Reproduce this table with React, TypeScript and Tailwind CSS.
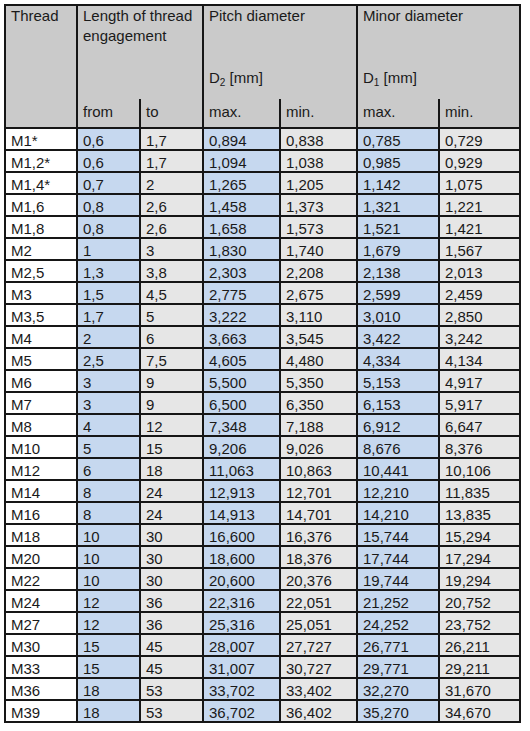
import React from 'react';
import clsx from 'clsx';

const rows: string[][] = [
    ['M1*', '0,6', '1,7', '0,894', '0,838', '0,785', '0,729'],
    ['M1,2*', '0,6', '1,7', '1,094', '1,038', '0,985', '0,929'],
    ['M1,4*', '0,7', '2', '1,265', '1,205', '1,142', '1,075'],
    ['M1,6', '0,8', '2,6', '1,458', '1,373', '1,321', '1,221'],
    ['M1,8', '0,8', '2,6', '1,658', '1,573', '1,521', '1,421'],
    ['M2', '1', '3', '1,830', '1,740', '1,679', '1,567'],
    ['M2,5', '1,3', '3,8', '2,303', '2,208', '2,138', '2,013'],
    ['M3', '1,5', '4,5', '2,775', '2,675', '2,599', '2,459'],
    ['M3,5', '1,7', '5', '3,222', '3,110', '3,010', '2,850'],
    ['M4', '2', '6', '3,663', '3,545', '3,422', '3,242'],
    ['M5', '2,5', '7,5', '4,605', '4,480', '4,334', '4,134'],
    ['M6', '3', '9', '5,500', '5,350', '5,153', '4,917'],
    ['M7', '3', '9', '6,500', '6,350', '6,153', '5,917'],
    ['M8', '4', '12', '7,348', '7,188', '6,912', '6,647'],
    ['M10', '5', '15', '9,206', '9,026', '8,676', '8,376'],
    ['M12', '6', '18', '11,063', '10,863', '10,441', '10,106'],
    ['M14', '8', '24', '12,913', '12,701', '12,210', '11,835'],
    ['M16', '8', '24', '14,913', '14,701', '14,210', '13,835'],
    ['M18', '10', '30', '16,600', '16,376', '15,744', '15,294'],
    ['M20', '10', '30', '18,600', '18,376', '17,744', '17,294'],
    ['M22', '10', '30', '20,600', '20,376', '19,744', '19,294'],
    ['M24', '12', '36', '22,316', '22,051', '21,252', '20,752'],
    ['M27', '12', '36', '25,316', '25,051', '24,252', '23,752'],
    ['M30', '15', '45', '28,007', '27,727', '26,771', '26,211'],
    ['M33', '15', '45', '31,007', '30,727', '29,771', '29,211'],
    ['M36', '18', '53', '33,702', '33,402', '32,270', '31,670'],
    ['M39', '18', '53', '36,702', '36,402', '35,270', '34,670'],
];

// column fills: thread white, then blue / gray alternating
const colBg = ['bg-white', 'bg-[#c6d8ef]', 'bg-[#e6e6e6]', 'bg-[#c6d8ef]', 'bg-[#e6e6e6]', 'bg-[#c6d8ef]', 'bg-[#e6e6e6]'];

const head = 'bg-[#cacaca] border-r-2 border-[#161616] pl-[5px]';

export default function App() {
    return (
        <div className="min-h-screen bg-white pl-[4px] pt-[4px] text-[15px] text-[#1a1a1a]" style={{ fontFamily: '"Liberation Sans", Arial, Helvetica, sans-serif' }}>
            <div className="grid w-[517px] grid-cols-[72px_63px_63px_77px_77px_82px_81px] grid-rows-[93px_30px] auto-rows-[22px] border-l-2 border-t-2 border-[#161616]">
                {/* Header */}
                <div className={clsx(head, 'row-span-2 border-b-2 leading-[20px]')}>Thread</div>
                <div className={clsx(head, 'col-span-2 leading-[20px]')}>
                    Length of thread
                    <br />
                    engagement
                </div>
                <div className={clsx(head, 'col-span-2 flex flex-col pb-[11px] leading-[20px]')}>
                    <span>Pitch diameter</span>
                    <span className="mt-auto">
                        D<sub className="text-[10px]">2</sub> [mm]
                    </span>
                </div>
                <div className={clsx(head, 'col-span-2 flex flex-col pb-[11px] leading-[20px]')}>
                    <span>Minor diameter</span>
                    <span className="mt-auto">
                        D<sub className="text-[10px]">1</sub> [mm]
                    </span>
                </div>
                {['from', 'to', 'max.', 'min.', 'max.', 'min.'].map((t, i) => (
                    <div key={i} className={clsx(head, 'border-b-2 pt-[3px] leading-[20px]')}>
                        {t}
                    </div>
                ))}

                {/* Body */}
                {rows.map((r, ri) =>
                    r.map((v, ci) => (
                        <div
                            key={`${ri}-${ci}`}
                            className={clsx('border-b-2 border-r-2 border-[#161616] pl-[5px] pt-[3px] leading-[17px] whitespace-nowrap', colBg[ci])}
                        >
                            {v}
                        </div>
                    ))
                )}
            </div>
        </div>
    );
}
